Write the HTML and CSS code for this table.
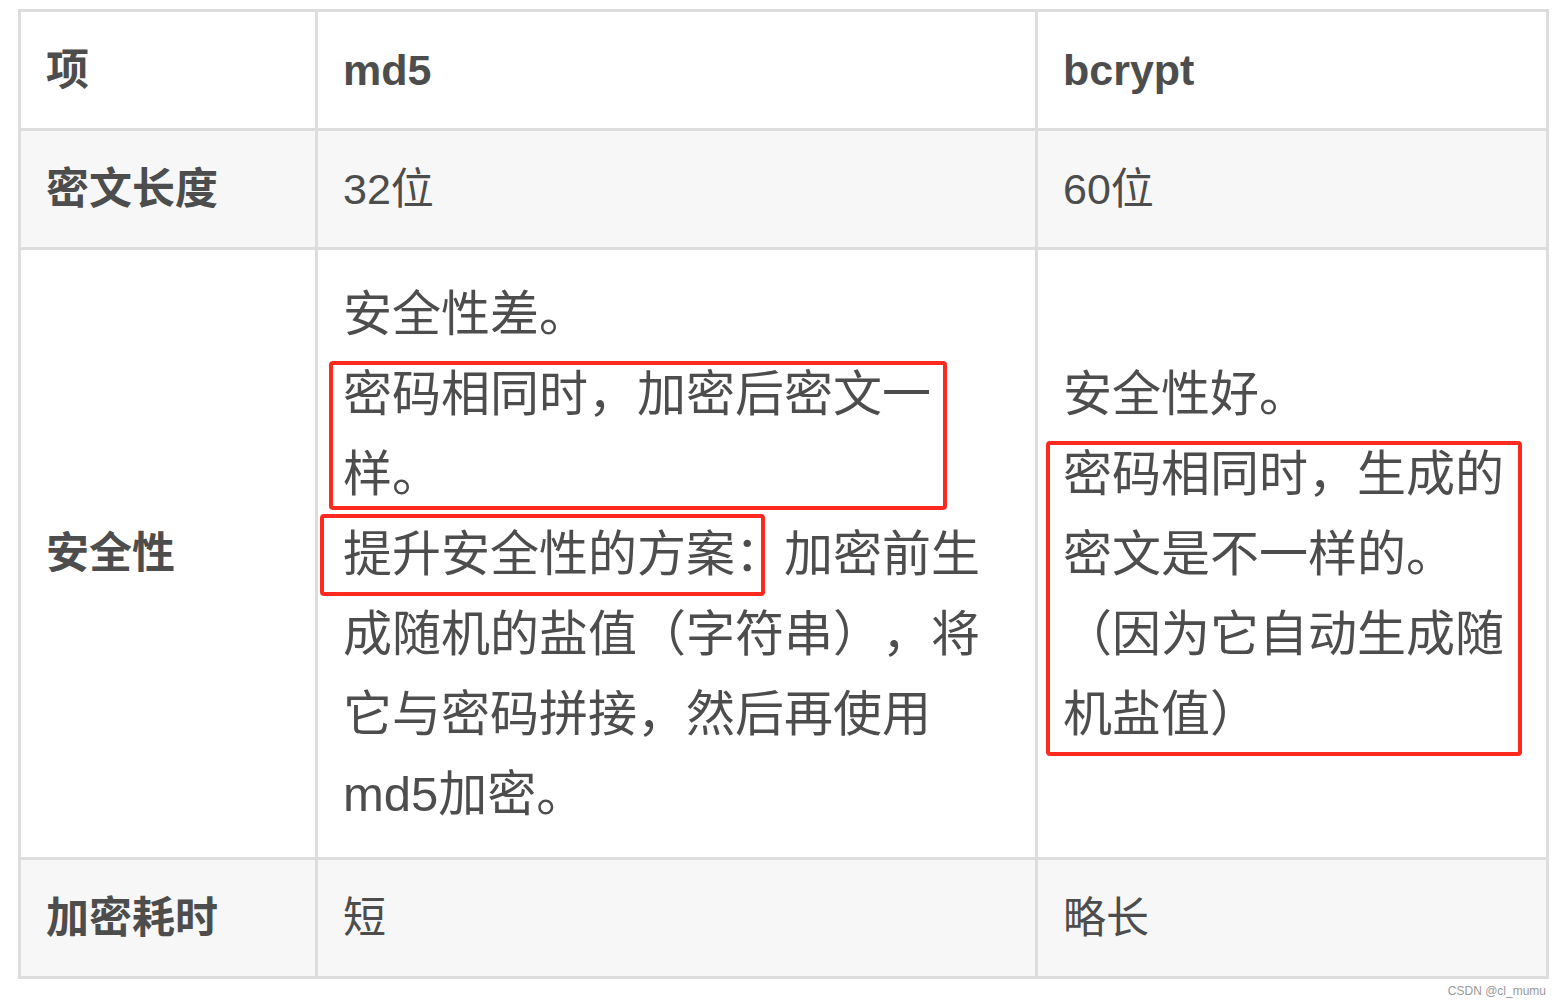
FILE: index.html
```html
<!DOCTYPE html>
<html lang="zh-CN">
<head>
<meta charset="utf-8">
<title>md5 vs bcrypt</title>
<link rel="stylesheet" href="styles.css">
</head>
<body>
<div class="page">
  <table class="cmp">
    <colgroup><col class="c1"><col class="c2"><col class="c3"></colgroup>
    <thead>
      <tr><th>项</th><th>md5</th><th>bcrypt</th></tr>
    </thead>
    <tbody>
      <tr class="even"><th>密文长度</th><td>32位</td><td>60位</td></tr>
      <tr class="tall"><th>安全性</th><td>安全性差。<br>密码相同时，加密后密文一样。<br>提升安全性的方案：加密前生成随机的盐值（字符串），将它与密码拼接，然后再使用md5加密。</td><td>安全性好。<br>密码相同时，生成的密文是不一样的。（因为它自动生成随机盐值）</td></tr>
      <tr class="even"><th>加密耗时</th><td>短</td><td>略长</td></tr>
    </tbody>
  </table>
  <div class="mark m1"></div>
  <div class="mark m2"></div>
  <div class="mark m3"></div>
  <div class="wm">CSDN @cl_mumu</div>
</div>
</body>
</html>
```

FILE: styles.css
```css
html, body {
  margin: 0;
  padding: 0;
  background: #ffffff;
}
body {
  font-family: "Liberation Sans", "Noto Sans CJK SC", sans-serif;
  color: #4d4d4d;
  text-spacing-trim: space-all;
}
.page {
  position: relative;
  width: 1561px;
  padding-top: 9px;
}
.cmp {
  border-spacing: 0;
  table-layout: fixed;
  width: 1531px;
  margin: 0 0 0 18px;
  border-top: 3px solid #dddddd;
  border-left: 3px solid #dddddd;
}
.c1 { width: 297px; }
.c2 { width: 720px; }
.c3 { width: 511px; }
.cmp th,
.cmp td {
  border-right: 3px solid #dddddd;
  border-bottom: 3px solid #dddddd;
  padding: 0 25px;
  height: 116px;
  vertical-align: middle;
  text-align: left;
  font-size: 43px;
  line-height: 1.4;
}
.cmp th { font-weight: bold; }
.cmp td { font-weight: normal; }
.even th,
.even td { background: #f7f7f7; }
.tall th,
.tall td { height: 607px; }
.tall td {
  font-size: 49px;
  line-height: 80px;
}
.mark {
  position: absolute;
  box-sizing: border-box;
  border: 4px solid #ff2a1f;
  border-radius: 4px;
}
.m1 { left: 329px; top: 361px; width: 618px; height: 149px; }
.m2 { left: 320px; top: 514px; width: 445px; height: 82px; }
.m3 { left: 1046px; top: 441px; width: 476px; height: 315px; }
.wm {
  width: 1546px;
  margin-top: 5px;
  text-align: right;
  font-size: 12px;
  line-height: 14px;
  color: #999999;
}
```
